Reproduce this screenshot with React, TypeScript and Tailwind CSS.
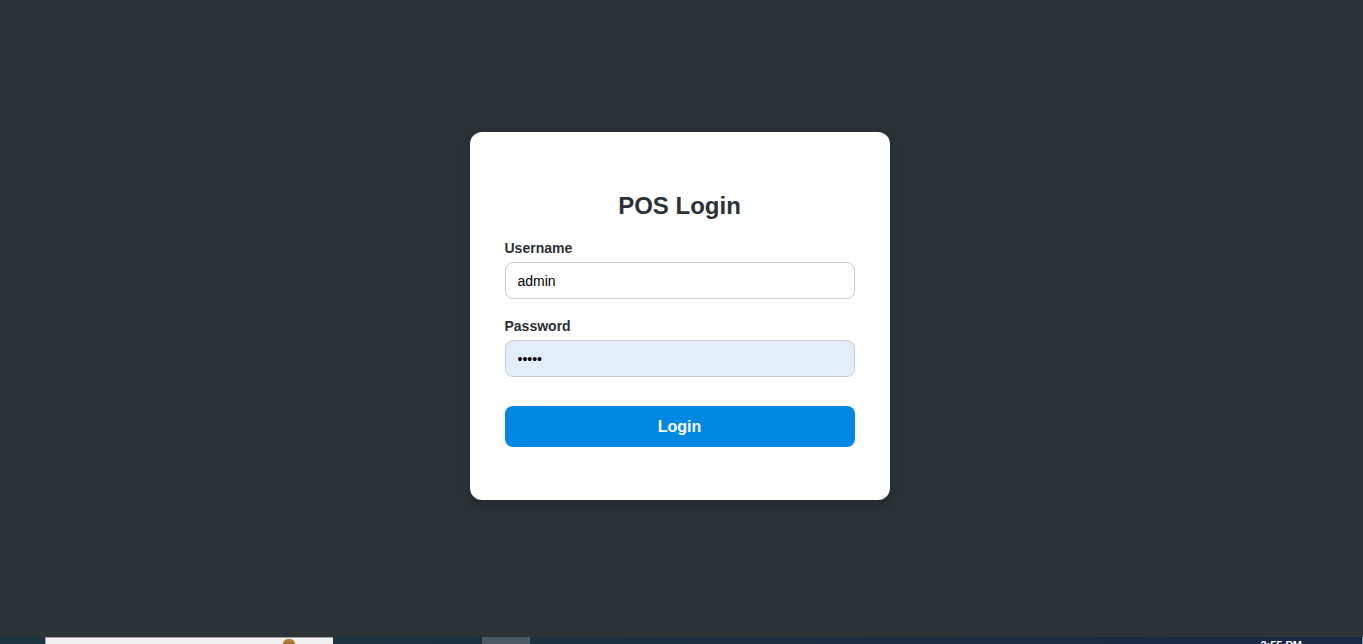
import { FC } from 'react';

const Taskbar: FC = () => (
  <div className="flex h-[7px] items-start overflow-hidden bg-gradient-to-r from-[#1c3640] via-[#1c2f40] to-[#1b2844]">
    <div className="ml-[45px] h-[7px] w-[288px] border-l border-t border-[#9aa0a4] bg-[#f0f0f0]">
      <div className="ml-[237px] mt-[1px] h-[10px] w-[12px] rounded-full bg-gradient-to-b from-[#c08a3e] to-[#7a4e1c]" />
    </div>
    <div className="ml-[149px] h-[7px] w-[48px] bg-[#4b5a62]" />
    <div className="ml-auto mr-[60px] pt-[3px] text-[11px] font-bold leading-none text-white">
      2:55 PM
    </div>
    <div className="h-[7px] w-px bg-[#8a9aa4]" />
  </div>
);

export default function App() {
  return (
    <div className="flex h-[644px] flex-col bg-[#2c3337] font-['Liberation_Sans',Arial,sans-serif]">
      <main className="flex flex-1 items-center justify-center pb-[5px] pr-[4px]">
        <form
          className="flex w-[420px] flex-col rounded-xl bg-white px-[35px] pb-[53px] pt-[60px] shadow-[0_4px_12px_rgba(0,0,0,0.25)]"
          onSubmit={(e) => e.preventDefault()}
        >
          <h2 className="text-center text-[24px] font-bold leading-[28px] text-[#2c3337]">
            POS Login
          </h2>

          <label className="mt-[20px] block text-[14px] font-bold leading-4 text-[#2b2f33]">
            Username
          </label>
          <input
            type="text"
            defaultValue="admin"
            className="mt-[6px] h-[37px] w-full rounded-lg border border-[#cccccc] bg-white px-3 text-[14px] text-black outline-none"
          />

          <label className="mt-[19px] block text-[14px] font-bold leading-4 text-[#2b2f33]">
            Password
          </label>
          <input
            type="password"
            defaultValue="admin"
            className="mt-[6px] h-[37px] w-full rounded-lg border border-[#cccccc] bg-[#e3eefb] px-3 text-[14px] text-black outline-none"
          />

          <button
            type="submit"
            className="mt-[29px] h-[41px] w-full rounded-lg bg-[#0088e3] text-[16px] font-bold text-white"
          >
            Login
          </button>
        </form>
      </main>
      <Taskbar />
    </div>
  );
}
